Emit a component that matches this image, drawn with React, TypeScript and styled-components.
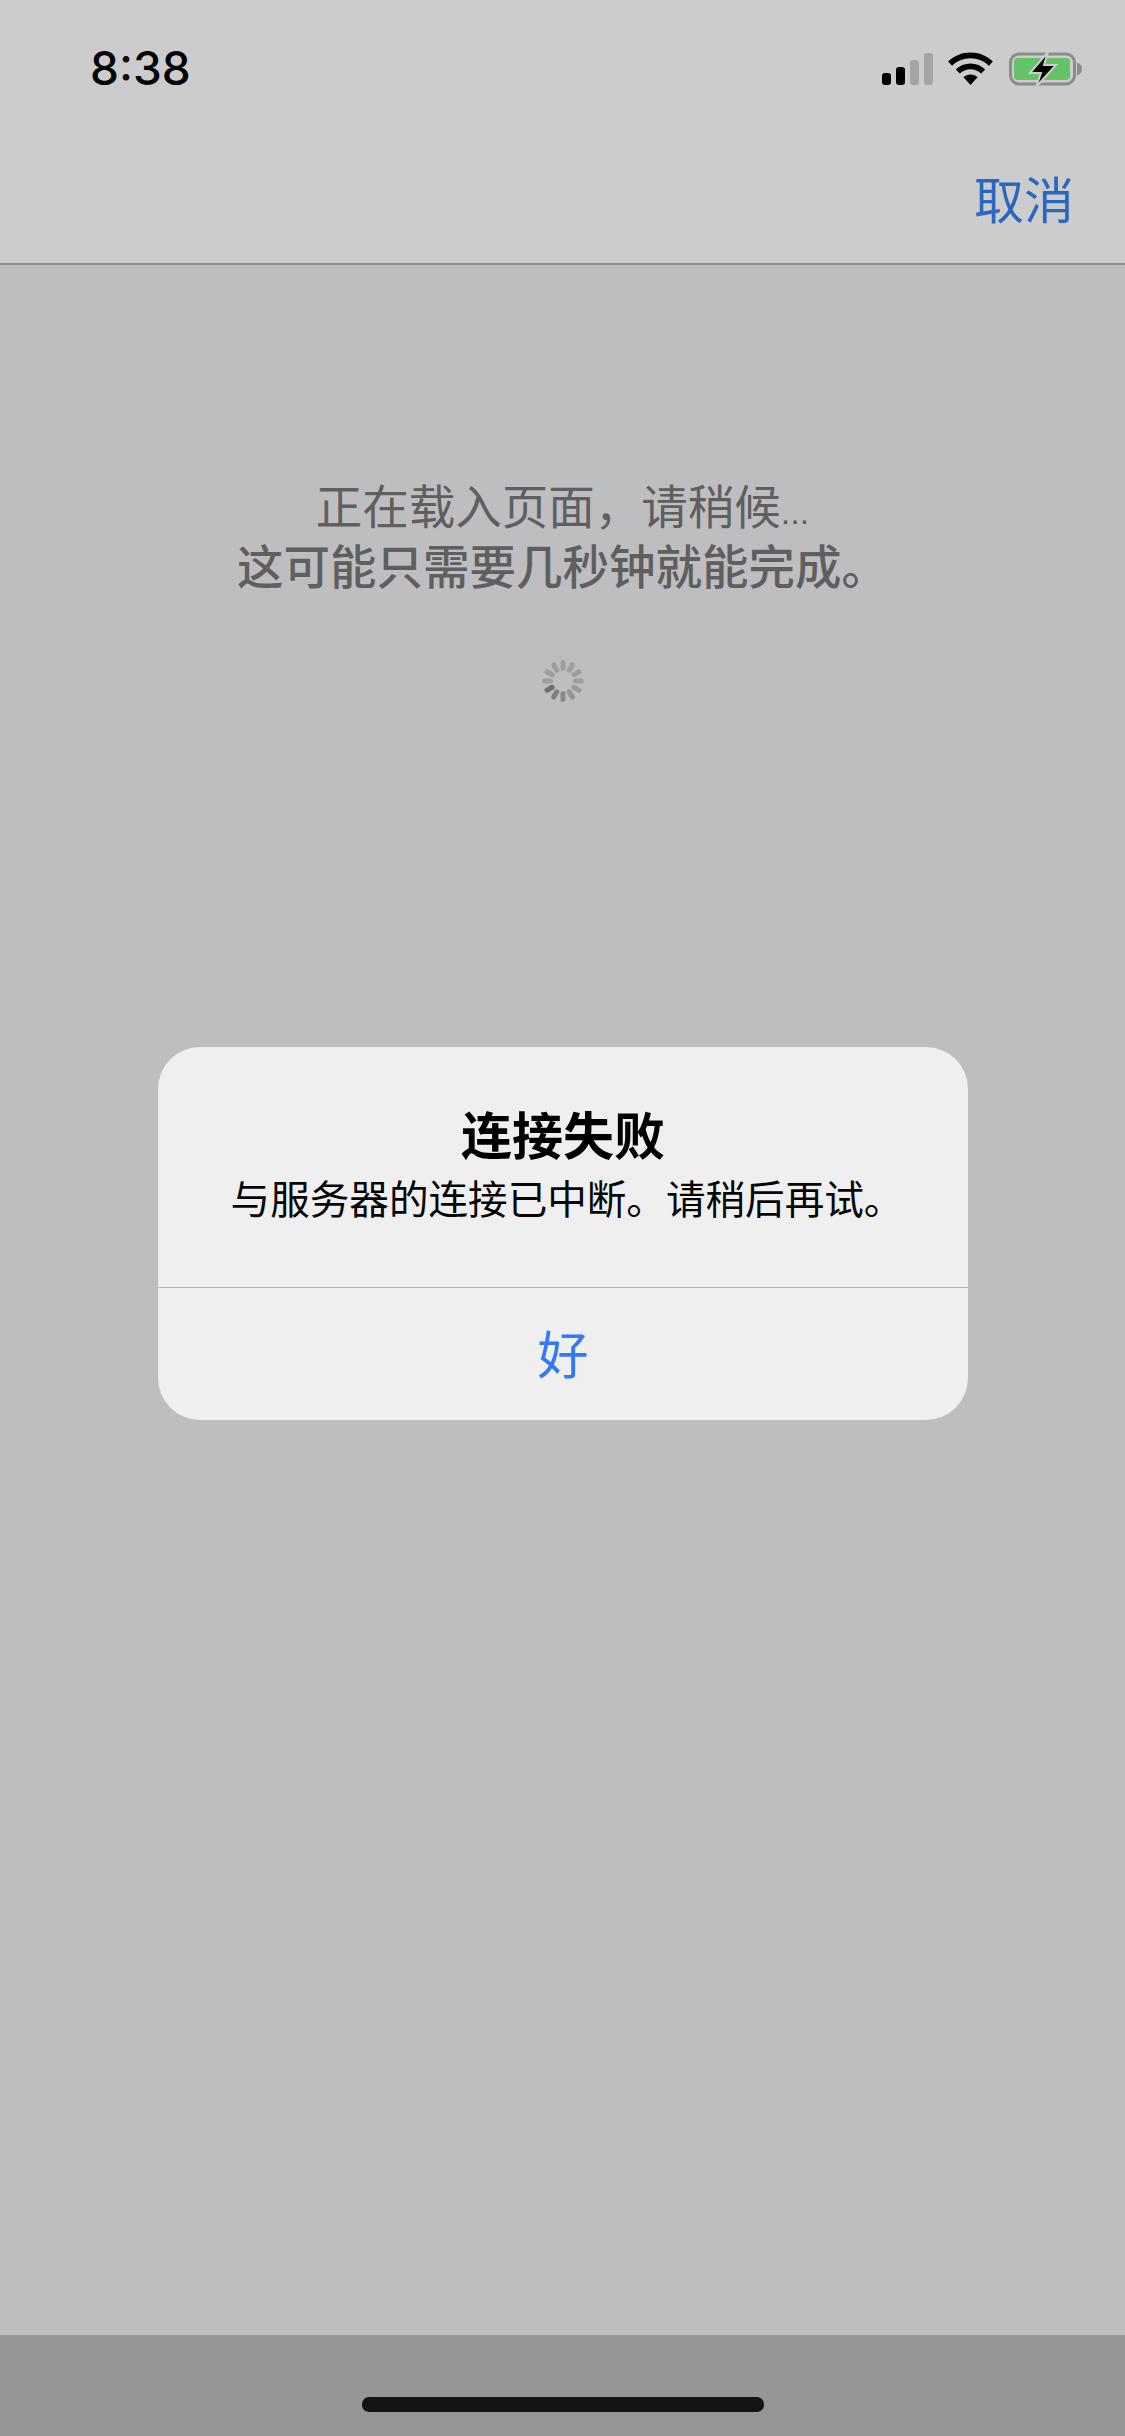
import React from "react";
import styled, { createGlobalStyle } from "styled-components";

const CJK = `"Noto Sans CJK SC", "Noto Sans", sans-serif`;

const Global = createGlobalStyle`
  html, body { margin: 0; padding: 0; }
  body { background: #bebec0; font-family: ${CJK}; }
`;

const Page = styled.div`
  position: relative;
  width: 1125px;
  height: 2436px;
  display: flex;
  flex-direction: column;
  overflow: hidden;
  background: #bebec0;
`;

const Header = styled.header`
  height: 265px;
  box-sizing: border-box;
  flex: none;
  background: #cccccc;
  border-bottom: 2px solid #909091;
  display: flex;
  flex-direction: column;
`;

const StatusBar = styled.div`
  height: 132px;
  flex: none;
  display: flex;
  align-items: flex-start;
  justify-content: space-between;
  padding: 0 43px 0 90px;
`;

const Time = styled.div`
  font-family: Inter, "Liberation Sans", sans-serif;
  font-size: 46px;
  font-weight: 500;
  line-height: 57px;
  padding-top: 40px;
  color: #050505;
`;

const StatusIcons = styled.svg`
  display: block;
  margin-top: 50px;
`;

const NavBar = styled.nav`
  flex: 1;
  display: flex;
  justify-content: flex-end;
  align-items: center;
  padding: 0 51px 2px 0;
`;

const NavButton = styled.div`
  font-size: 50px;
  line-height: 66px;
  color: #2a68c0;
`;

const Content = styled.main`
  flex: 1;
  display: flex;
  flex-direction: column;
  align-items: center;
  padding-top: 209px;
`;

const LoadingLine = styled.div<{ $strong?: boolean }>`
  font-size: 46.5px;
  line-height: 60px;
  height: 60px;
  color: #5f5f60;
  font-weight: ${(p) => (p.$strong ? 500 : 400)};
  white-space: nowrap;
`;

const Dots = styled.span`
  font-family: "Liberation Sans", sans-serif;
  font-size: 34px;
`;

const Spinner = styled.svg`
  display: block;
  margin-top: 65px;
`;

const HomeArea = styled.footer`
  height: 101px;
  flex: none;
  background: #969698;
  display: flex;
  justify-content: center;
  padding-top: 62px;
  box-sizing: border-box;
`;

const HomeBar = styled.div`
  width: 402px;
  height: 15px;
  border-radius: 7px;
  background: #141414;
`;

const Dialog = styled.div`
  position: absolute;
  left: 158px;
  top: 1047px;
  width: 810px;
  height: 373px;
  border-radius: 42px;
  background: #efeff0;
  display: flex;
  flex-direction: column;
  overflow: hidden;
`;

const DialogBody = styled.div`
  height: 241px;
  flex: none;
  box-sizing: border-box;
  border-bottom: 1px solid #b4b4b6;
  display: flex;
  flex-direction: column;
  align-items: center;
  padding-top: 53px;
`;

const DialogTitle = styled.div`
  font-size: 51px;
  line-height: 66px;
  font-weight: 600;
  color: #000;
`;

const DialogMessage = styled.div`
  font-size: 39.6px;
  line-height: 54px;
  margin-top: 4px;
  padding-left: 8px;
  color: #050505;
  white-space: nowrap;
`;

const DialogAction = styled.div`
  flex: 1;
  display: flex;
  align-items: center;
  justify-content: center;
  padding-bottom: 5px;
  font-size: 51px;
  color: #3478f6;
`;

const SPOKES = [0.3, 0.3, 0.3, 0.3, 0.35, 0.4, 0.5, 0.6, 0.75, 0.3, 0.3, 0.3];

export default function App() {
  return (
    <Page>
      <Global />
      <Header>
        <StatusBar>
          <Time>8:38</Time>
          <StatusIcons width="200" height="38" viewBox="882 50 200 38">
            <rect x="882" y="73" width="9" height="12" rx="3" fill="#000" />
            <rect x="896" y="67" width="9" height="18" rx="3" fill="#000" />
            <rect x="910" y="60" width="9" height="25" rx="3" fill="#a4a4a4" />
            <rect x="924" y="53" width="9" height="32" rx="3" fill="#a4a4a4" />
            <path d="M970.5 52.5c8.700 0 16.600 3.400 22.400 9l-4 4.200c-4.800-4.600-11.300-7.400-18.400-7.400s-13.600 2.800-18.400 7.400l-4-4.200c5.800-5.600 13.700-9 22.400-9z" fill="#000" />
            <path d="M970.500 63.500c5.700 0 10.900 2.200 14.700 5.900l-4 4.200c-2.800-2.600-6.500-4.300-10.700-4.300s-7.900 1.700-10.700 4.300l-4-4.200c3.800-3.700 9-5.900 14.700-5.900z" fill="#000" />
            <path d="M970.500 74.500c2.700 0 5.100 1 7 2.700l-7 7.800-7-7.800c1.900-1.700 4.300-2.700 7-2.700z" fill="#000" />
            <rect x="1010.500" y="54" width="64" height="30" rx="8.500" fill="none" stroke="#8c8c8c" strokeWidth="3" />
            <path d="M1077 62.500c3 .8 5 3.400 5 6.500s-2 5.700-5 6.500z" fill="#8c8c8c" />
            <rect x="1014" y="58" width="56" height="22" rx="4" fill="#63c467" />
            <path d="M1048 52l-18 21h11l-5 14 20-22h-12l4-13z" fill="#000" stroke="#cccccc" strokeWidth="2" strokeLinejoin="miter" />
          </StatusIcons>
        </StatusBar>
        <NavBar>
          <NavButton>取消</NavButton>
        </NavBar>
      </Header>
      <Content>
        <LoadingLine>
          正在载入页面，请稍候<Dots>...</Dots>
        </LoadingLine>
        <LoadingLine $strong>这可能只需要几秒钟就能完成。</LoadingLine>
        <Spinner width="44" height="44" viewBox="-22 -22 44 44">
          {SPOKES.map((o, i) => (
            <rect
              key={i}
              x="-2.500"
              y="-21"
              width="5"
              height="11"
              rx="2.500"
              fill="#55555a"
              opacity={o}
              transform={`rotate(${i * 30})`}
            />
          ))}
        </Spinner>
      </Content>
      <HomeArea>
        <HomeBar />
      </HomeArea>
      <Dialog>
        <DialogBody>
          <DialogTitle>连接失败</DialogTitle>
          <DialogMessage>与服务器的连接已中断。请稍后再试。</DialogMessage>
        </DialogBody>
        <DialogAction>好</DialogAction>
      </Dialog>
    </Page>
  );
}
